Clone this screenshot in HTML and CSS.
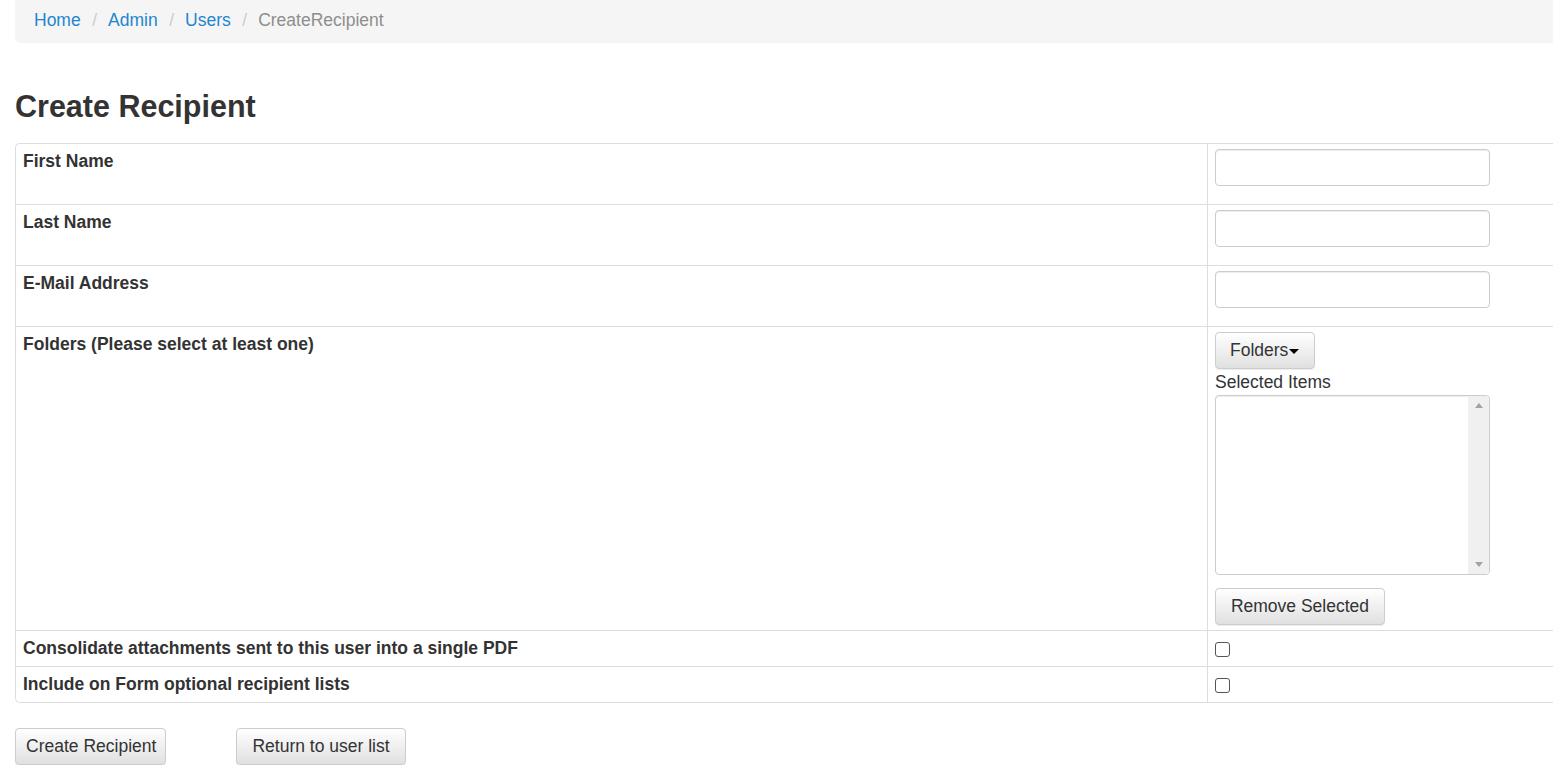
FILE: index.html
```html
<!DOCTYPE html>
<html lang="en">
<head>
<meta charset="utf-8">
<title>Create Recipient</title>
<link rel="stylesheet" href="styles.css">
</head>
<body>
<div class="page">
  <ol class="breadcrumb">
    <li><a href="#">Home</a></li>
    <li class="sep">/</li>
    <li><a href="#">Admin</a></li>
    <li class="sep">/</li>
    <li><a href="#">Users</a></li>
    <li class="sep">/</li>
    <li class="active">CreateRecipient</li>
  </ol>

  <h2 class="title">Create Recipient</h2>

  <div class="form-table">
    <div class="row">
      <div class="label">First Name</div>
      <div class="field"><input class="text-input" type="text"></div>
    </div>
    <div class="row">
      <div class="label">Last Name</div>
      <div class="field"><input class="text-input" type="text"></div>
    </div>
    <div class="row">
      <div class="label">E-Mail Address</div>
      <div class="field"><input class="text-input" type="text"></div>
    </div>
    <div class="row">
      <div class="label">Folders (Please select at least one)</div>
      <div class="field">
        <button class="btn btn-folders" type="button">Folders<span class="caret"></span></button>
        <div class="sel-label">Selected Items</div>
        <div class="listbox">
          <div class="listbox-body"></div>
          <div class="scrollbar">
            <span class="arrow-up"></span>
            <span class="arrow-down"></span>
          </div>
        </div>
        <button class="btn btn-remove" type="button">Remove Selected</button>
      </div>
    </div>
    <div class="row row-check">
      <div class="label">Consolidate attachments sent to this user into a single PDF</div>
      <div class="field"><span class="checkbox"></span></div>
    </div>
    <div class="row row-check">
      <div class="label">Include on Form optional recipient lists</div>
      <div class="field"><span class="checkbox"></span></div>
    </div>
  </div>

  <div class="actions">
    <button class="btn btn-create" type="button">Create Recipient</button>
    <button class="btn btn-return" type="button">Return to user list</button>
  </div>
</div>
</body>
</html>
```
FILE: styles.css
```css
html, body {
  margin: 0;
  padding: 0;
  overflow: hidden;
  background: #fff;
}
body {
  font-family: "Liberation Sans", Arial, Helvetica, sans-serif;
  font-size: 17.5px;
  line-height: 25px;
  color: #333;
}
.page {
  margin-left: 15px;
  width: 1560px;
}
.breadcrumb {
  list-style: none;
  margin: 0;
  padding: 8px 19px 10px;
  height: 25px;
  background: #f5f5f5;
  border-radius: 0 0 5px 5px;
  display: flex;
  align-items: center;
}
.breadcrumb li {
  display: block;
  white-space: nowrap;
}
.breadcrumb a {
  color: #1f86d0;
  text-decoration: none;
}
.breadcrumb .sep {
  color: #ccc;
  padding: 0 11px 0 11.5px;
}
.breadcrumb .active {
  color: #8e8e8e;
}
.title {
  margin: 45px 0 0;
  font-size: 30.5px;
  line-height: 36px;
  font-weight: bold;
  color: #333;
  height: 55px;
  padding-top: 0;
}
.form-table {
  border: 1px solid #ddd;
  border-right: none;
  border-radius: 5px 0 0 5px;
}
.row {
  display: flex;
  border-top: 1px solid #ddd;
}
.row:first-child {
  border-top: none;
}
.label {
  width: 1177px;
  padding: 5px 7px 5px 7px;
  font-weight: bold;
  border-right: 1px solid #ddd;
}
.field {
  flex: 1;
  padding: 5px 7px;
}
.text-input {
  display: block;
  box-sizing: border-box;
  width: 275px;
  height: 37px;
  margin: 0 0 13px;
  border: 1px solid #ccc;
  border-radius: 4px;
  box-shadow: inset 0 1px 1px rgba(0,0,0,0.075);
  background: #fff;
  font: inherit;
  padding: 0 10px;
}
.btn {
  display: block;
  box-sizing: border-box;
  height: 37px;
  border: 1px solid #ccc;
  border-radius: 4px;
  background: linear-gradient(to bottom, #ffffff 0%, #e0e0e0 100%);
  box-shadow: inset 0 1px 0 rgba(255,255,255,0.15), 0 1px 1px rgba(0,0,0,0.075);
  font-family: "Liberation Sans", Arial, Helvetica, sans-serif;
  font-size: 17.5px;
  color: #333;
  padding: 0 10px;
  white-space: nowrap;
  cursor: pointer;
}
.btn-folders {
  width: 100px;
  padding: 0 14px;
  text-align: left;
}
.caret {
  display: inline-block;
  width: 0;
  height: 0;
  margin-left: 1px;
  vertical-align: middle;
  border-top: 5px solid #000;
  border-left: 5px solid transparent;
  border-right: 5px solid transparent;
}
.sel-label {
  height: 26px;
  line-height: 26px;
}
.listbox {
  box-sizing: border-box;
  width: 275px;
  height: 180px;
  border: 1px solid #ccc;
  border-radius: 4px;
  display: flex;
  overflow: hidden;
  box-shadow: inset 0 1px 1px rgba(0,0,0,0.075);
}
.listbox-body {
  flex: 1;
}
.scrollbar {
  width: 21px;
  background: #f0f0f0;
  display: flex;
  flex-direction: column;
  justify-content: space-between;
  align-items: center;
  padding: 7px 0;
}
.arrow-up {
  width: 0;
  height: 0;
  border-bottom: 5px solid #a3a3a3;
  border-left: 4.5px solid transparent;
  border-right: 4.5px solid transparent;
}
.arrow-down {
  width: 0;
  height: 0;
  border-top: 5px solid #a3a3a3;
  border-left: 4.5px solid transparent;
  border-right: 4.5px solid transparent;
}
.btn-remove {
  margin-top: 13px;
  width: 170px;
}
.row-check .field {
  display: flex;
  align-items: center;
}
.checkbox {
  display: block;
  box-sizing: border-box;
  width: 15px;
  height: 15px;
  border: 1px solid #555;
  border-radius: 3px;
  background: #fff;
  margin-top: 2px;
}
.actions {
  display: flex;
  gap: 70px;
  margin-top: 25px;
}
.btn-create {
  width: 151px;
}
.btn-return {
  width: 170px;
}
```
